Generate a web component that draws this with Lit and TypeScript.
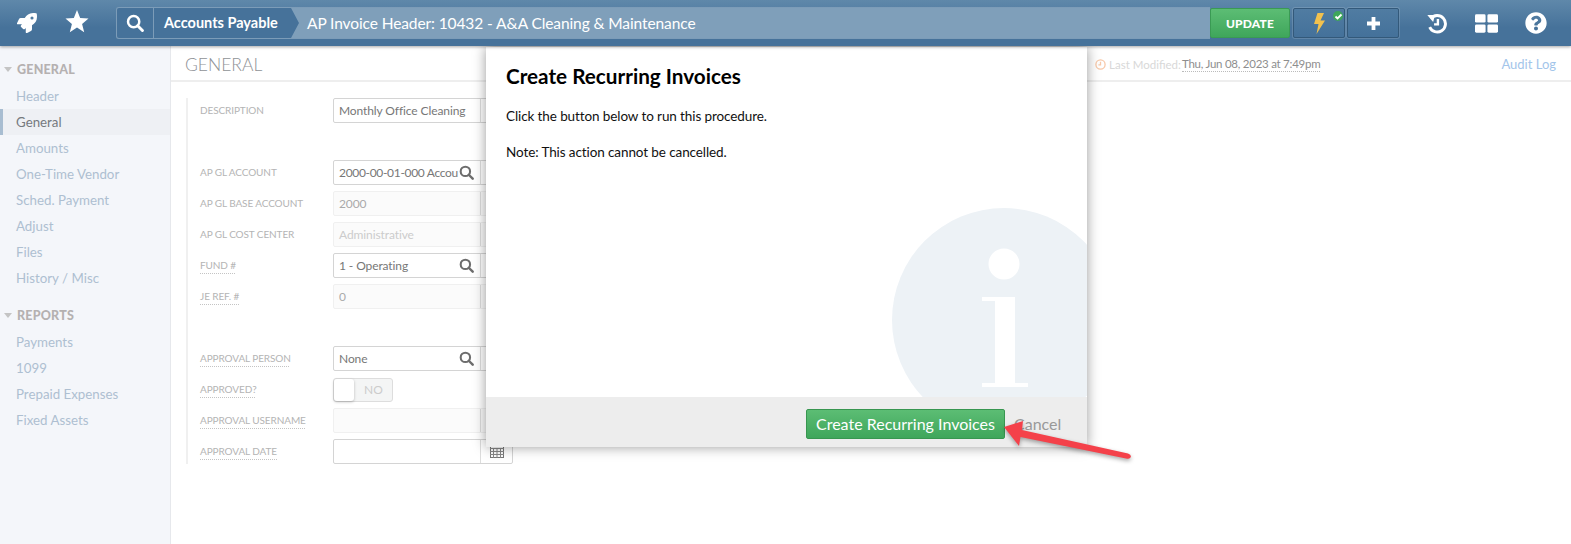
import { LitElement, css, html, svg } from 'lit';
import { customElement } from 'lit/decorators.js';
import { classMap } from 'lit/directives/class-map.js';

const searchIcon = (size = 16) => html`<svg width=${size} height=${size} viewBox="0 0 16 16" fill="none" stroke="currentColor" stroke-width="2.2">
  <circle cx="6.8" cy="6.8" r="5"></circle><path d="M10.4 10.4l4.2 4.2" stroke-linecap="round" stroke-width="2.6"></path>
</svg>`;

const generalItems = ['Header', 'General', 'Amounts', 'One-Time Vendor', 'Sched. Payment', 'Adjust', 'Files', 'History / Misc'];
const reportItems = ['Payments', '1099', 'Prepaid Expenses', 'Fixed Assets'];

type Row = { label?: string; value?: string; kind?: string; dotted?: boolean };

const rows: Row[] = [
  { label: 'DESCRIPTION', value: 'Monthly Office Cleaning', kind: 'text' },
  {},
  { label: 'AP GL ACCOUNT', value: '2000-00-01-000 Accou', kind: 'search' },
  { label: 'AP GL BASE ACCOUNT', value: '2000', kind: 'off' },
  { label: 'AP GL COST CENTER', value: 'Administrative', kind: 'off faint' },
  { label: 'FUND #', value: '1 - Operating', kind: 'search', dotted: true },
  { label: 'JE REF. #', value: '0', kind: 'off', dotted: true },
  {},
  { label: 'APPROVAL PERSON', value: 'None', kind: 'search', dotted: true },
  { label: 'APPROVED?', kind: 'toggle', dotted: true },
  { label: 'APPROVAL USERNAME', value: '', kind: 'off', dotted: true },
  { label: 'APPROVAL DATE', value: '', kind: 'date', dotted: true },
];

@customElement('app-root')
export class AppRoot extends LitElement {
  renderField(r: Row) {
    if (r.kind === 'toggle') {
      return html`<div class="toggle"><span class="knob"></span><span class="no">NO</span></div>`;
    }
    const kind = r.kind ?? 'text';
    const off = kind.startsWith('off');
    const classes = { field: true, off, faint: kind.includes('faint') };
    const tight = kind === 'search' && (r.value?.length ?? 0) > 16;
    return html`<div class=${classMap(classes)}>
      <span class=${classMap({ value: true, tight })}>${r.value}</span>
      ${kind === 'search' ? html`<span class="lookup">${searchIcon(15)}</span>` : ''}
      <span class="addon">
        ${kind === 'date'
          ? html`<svg width="14" height="13" viewBox="0 0 14 13"><rect x=".5" y=".5" width="13" height="12" fill="#fff" stroke="#777"></rect><path d="M0 3.5h14M0 6.5h14M0 9.5h14M3.5 3v10M7 3v10M10.5 3v10" stroke="#888" fill="none"></path></svg>`
          : ''}
      </span>
    </div>`;
  }

  renderSection(title: string, items: string[]) {
    return html`<div class="nav-section">
      <div class="nav-title"><span class="tri"></span>${title}</div>
      ${items.map(i => html`<div class=${classMap({ 'nav-item': true, active: i === 'General' })}>${i}</div>`)}
    </div>`;
  }

  render() {
    return html`
      <header class="topbar">
        <div class="brand-icons">
          <svg width="20" height="20" viewBox="0 0 512 512" fill="#fff"><path d="M505.05 19.1a15.89 15.89 0 0 0-12.2-12.2C460.65 0 435.46 0 410.36 0c-103.2 0-165.1 55.2-211.29 128H94.87A48 48 0 0 0 52 154.49l-49.42 98.8A24 24 0 0 0 24.07 288h103.77l-22.47 22.47a32 32 0 0 0 0 45.25l50.9 50.91a32 32 0 0 0 45.26 0L224 384.16V488a24 24 0 0 0 34.7 21.49l98.7-49.39a47.91 47.91 0 0 0 26.5-42.9V312.79c72.59-46.3 128-108.4 128-211.09.1-25.2.1-50.4-6.85-82.6zM384 168a40 40 0 1 1 40-40 40 40 0 0 1-40 40z"></path></svg>
          <svg class="star" width="24" height="24" viewBox="0 0 25 24" fill="#fff"><path d="M12.5 0.5l3.3 8.3 8.7.6-6.7 5.6 2.2 8.7-7.5-4.8-7.5 4.8 2.2-8.7L.5 9.4l8.7-.6z"></path></svg>
        </div>
        <div class="crumbs">
          <span class="crumb-search">${searchIcon(18)}</span>
          <span class="crumb-module">Accounts Payable</span>
          <span class="crumb-title">AP Invoice Header: 10432 - A&amp;A Cleaning &amp; Maintenance</span>
        </div>
        <button class="update" type="button">UPDATE</button>
        <button class="tool bolt" type="button">
          <svg width="13" height="21" viewBox="0 0 13 21" fill="#f2c14e"><path d="M4.5 0h6.5L7.5 7.5H12L3.5 21l2-10H1z"></path></svg>
          <span class="check"><svg width="9" height="9" viewBox="0 0 9 9" fill="none" stroke="#fff" stroke-width="1.8"><path d="M1.5 4.5l2 2 4-4"></path></svg></span>
        </button>
        <button class="tool plus" type="button">
          <svg width="15" height="15" viewBox="0 0 15 15" fill="#fff"><path d="M5.6 1h3.8v4.6H14v3.8H9.4V14H5.6V9.4H1V5.6h4.6z"></path></svg>
        </button>
        <div class="actions">
          <svg width="22" height="22" viewBox="0 0 24 24" fill="none" stroke="#fff"><path d="M5.2 7.2A9 9 0 1 1 4 16.5" stroke-width="3.2"></path><path d="M1.4 3.2l8.4 0-2 7.6z" fill="#fff" stroke="none"></path><path d="M13 7.5v6H8.8" stroke-width="2.6"></path></svg>
          <svg width="23" height="19" viewBox="0 0 25 20" fill="#fff"><rect width="11.5" height="9" rx="1.5"></rect><rect x="13.5" width="11.5" height="9" rx="1.5"></rect><rect y="11" width="11.5" height="9" rx="1.5"></rect><rect x="13.5" y="11" width="11.5" height="9" rx="1.5"></rect></svg>
          <svg width="22" height="22" viewBox="0 0 512 512" fill="#fff"><path d="M504 256c0 136.997-111.043 248-248 248S8 392.997 8 256C8 119.083 119.043 8 256 8s248 111.083 248 248zM262.655 90c-54.497 0-89.255 22.957-116.549 63.758-3.536 5.286-2.353 12.415 2.715 16.258l34.699 26.31c5.205 3.947 12.621 3.008 16.665-2.122 17.864-22.658 30.113-35.797 57.303-35.797 20.429 0 45.698 13.148 45.698 32.958 0 14.976-12.363 22.667-32.534 33.976C247.128 238.528 216 254.941 216 296v4c0 6.627 5.373 12 12 12h56c6.627 0 12-5.373 12-12v-1.333c0-28.462 83.186-29.647 83.186-106.667 0-58.002-60.165-102-116.531-102zM256 338c-25.365 0-46 20.635-46 46 0 25.364 20.635 46 46 46s46-20.636 46-46c0-25.365-20.635-46-46-46z"></path></svg>
        </div>
      </header>

      <div class="body">
        <nav class="sidebar">
          ${this.renderSection('GENERAL', generalItems)}
          ${this.renderSection('REPORTS', reportItems)}
        </nav>
        <main class="main">
          <div class="main-head">
            <h2>GENERAL</h2>
            <div class="modified">
              <svg width="11" height="11" viewBox="0 0 11 11" fill="none" stroke="#f8c8a8" stroke-width="1.3"><circle cx="5.5" cy="5.5" r="4.6"></circle><path d="M5.5 2.8v3H3.4"></path></svg>
              <span class="mod-label">Last Modified:</span>
              <span class="mod-date">Thu, Jun 08, 2023 at 7:49pm</span>
            </div>
            <a class="audit">Audit Log</a>
          </div>
          <div class="form">
            ${rows.map(r => r.label
              ? html`<div class="row">
                  <label class=${classMap({ dotted: !!r.dotted })}>${r.label}</label>
                  ${this.renderField(r)}
                </div>`
              : html`<div class="row"></div>`)}
          </div>
        </main>
      </div>

      <section class="modal">
        <div class="modal-body">
          <h1>Create Recurring Invoices</h1>
          <p>Click the button below to run this procedure.</p>
          <p>Note: This action cannot be cancelled.</p>
          <svg class="info" width="224" height="224" viewBox="0 0 224 224">
            <circle cx="112" cy="112" r="112" fill="#edf2f6"></circle>
            ${svg`<circle cx="112" cy="56" r="15.5" fill="#fff"></circle>
            <path d="M90 89h33v86h13v4H90v-4h13V93H90z" fill="#fff"></path>`}
          </svg>
        </div>
        <footer class="modal-foot">
          <button class="run" type="button">Create Recurring Invoices</button>
          <span class="cancel">Cancel</span>
        </footer>
      </section>

      <svg class="arrow" width="140" height="50" viewBox="0 0 140 50" fill="#f4414a">
        <path d="M3 17L22 11L21 20L127 43.5Q131 45 129.5 47.5Q128 49.5 125 48.5L19.5 27L18 36z"></path>
      </svg>
    `;
  }

  static override styles = css`
    :host {
      display: block;
      position: relative;
      width: 1571px;
      height: 544px;
      overflow: hidden;
      background: #fff;
      font-family: 'Lato', 'Liberation Sans', sans-serif;
      font-size: 14px;
      color: #777;
    }

    .topbar {
      position: relative;
      z-index: 2;
      height: 46px;
      box-sizing: border-box;
      display: flex;
      align-items: center;
      padding: 0 0 0 17px;
      background: linear-gradient(#5f88aa, #46729a 60%);
      box-shadow: 0 1px 3px rgba(0, 0, 0, 0.35);
    }
    .brand-icons { display: flex; align-items: center; gap: 28px; width: 99px; }
    .star { margin-bottom: 4px; }
    .crumbs {
      flex: none;
      width: 1094px;
      height: 32px;
      display: flex;
      align-items: stretch;
      box-sizing: border-box;
      border: 1px solid #7c9cb8;
      border-right: 0;
      border-radius: 3px 0 0 3px;
      overflow: hidden;
      background: #7f9fba;
      color: #fff;
    }
    .crumb-search {
      width: 36px;
      display: flex;
      align-items: center;
      justify-content: center;
      background: #46729a;
      border-right: 1px solid #7c9cb8;
    }
    .crumb-module {
      position: relative;
      width: 137px;
      box-sizing: border-box;
      padding-left: 10px;
      line-height: 30px;
      font-weight: 700;
      font-size: 14.5px;
      background: #46729a;
      white-space: nowrap;
    }
    .crumb-module::after {
      content: '';
      position: absolute;
      left: 137px;
      top: 0;
      border-left: 8px solid #46729a;
      border-top: 15px solid transparent;
      border-bottom: 15px solid transparent;
    }
    .crumb-title {
      padding-left: 16px;
      line-height: 30px;
      font-size: 15.5px;
      letter-spacing: -0.1px;
      white-space: nowrap;
    }
    button { font-family: inherit; cursor: pointer; }
    .update {
      flex: none;
      width: 80px;
      height: 30px;
      padding: 0;
      border: 1px solid #3a9a54;
      border-radius: 2px;
      background: linear-gradient(#5cbd74, #3fa65b);
      color: #fff;
      font-weight: 900;
      font-size: 12px;
      letter-spacing: 0.2px;
    }
    .tool {
      flex: none;
      position: relative;
      height: 30px;
      padding: 0;
      display: flex;
      align-items: center;
      justify-content: center;
      border: 1px solid #33597a;
      border-radius: 2px;
      background: linear-gradient(#507ca2, #44719a);
      box-shadow: 0 0 0 1px rgba(255, 255, 255, 0.14);
    }
    .bolt { width: 52px; margin-left: 3px; }
    .plus { width: 52px; margin-left: 2px; }
    .check {
      position: absolute;
      top: 2px;
      right: 1px;
      width: 10px;
      height: 10px;
      border-radius: 50%;
      background: #3fa65b;
      display: flex;
      align-items: center;
      justify-content: center;
    }
    .actions { flex: none; display: flex; align-items: center; margin-left: 27px; gap: 27px; }

    .body { display: flex; height: 498px; }
    .sidebar {
      flex: none;
      width: 171px;
      box-sizing: border-box;
      padding-top: 10px;
      background: #f4f6fa;
      border-right: 1px solid #e6e8ec;
    }
    .nav-section { margin-bottom: 11px; }
    .nav-title {
      display: flex;
      align-items: center;
      height: 27px;
      font-size: 12.5px;
      font-weight: 900;
      color: #b5b1b1;
      letter-spacing: 0.2px;
    }
    .tri {
      width: 0;
      margin: 0 5px 0 4px;
      border-left: 4px solid transparent;
      border-right: 4px solid transparent;
      border-top: 5px solid #c4c4c4;
    }
    .nav-item {
      height: 26px;
      line-height: 26px;
      padding-left: 16px;
      font-size: 13.3px;
      color: #aebfd1;
    }
    .nav-item.active {
      padding-left: 13px;
      border-left: 3px solid #a8bdd1;
      background: #eef0f4;
      color: #75797e;
    }

    .main { flex: 1; min-width: 0; }
    .main-head {
      height: 36px;
      box-sizing: border-box;
      display: flex;
      align-items: center;
      padding: 2px 15px 0 14px;
      border-bottom: 2px solid #eee;
    }
    .main-head h2 {
      flex: 1;
      margin: 0;
      font-size: 17.5px;
      font-weight: 300;
      color: #8f9296;
    }
    .modified { display: flex; align-items: center; font-size: 11.5px; gap: 3px; margin-right: 181px; }
    .mod-label { color: #d8d8d8; }
    .mod-date { color: #8e8e8e; border-bottom: 1px dotted #bbb; line-height: 14px; letter-spacing: -0.25px; margin-left: -2px; }
    .audit { font-size: 13px; color: #a3c5ea; }

    .form {
      margin: 16px 0 0 15px;
      padding-left: 12px;
      border-left: 2px solid #f0f0f0;
      width: 313px;
      display: flex;
      flex-direction: column;
      gap: 6px;
    }
    .row { display: flex; align-items: center; height: 25px; }
    label {
      flex: none;
      width: 133px;
      margin-bottom: 1px;
      font-size: 10px;
      color: #b4b4b4;
      letter-spacing: -0.1px;
    }
    label.dotted { text-decoration: underline dotted #c4c4c4; text-underline-offset: 4px; }
    .field {
      flex: none;
      position: relative;
      box-sizing: border-box;
      width: 180px;
      height: 25px;
      display: flex;
      align-items: center;
      padding-left: 5px;
      border: 1px solid #d4d4d4;
      border-radius: 2px;
      background: #fff;
      font-size: 12px;
      letter-spacing: -0.1px;
      color: #777;
    }
    .field.off { background: #fbfbfb; border-color: #f0f0f0; color: #aaa; }
    .field.faint { color: #ccc; }
    .value { white-space: nowrap; }
    .value.tight { letter-spacing: -0.32px; }
    .lookup { position: absolute; left: 125px; top: 4px; color: #6d6d6d; display: flex; }
    .addon {
      position: absolute;
      right: 0;
      top: 0;
      bottom: 0;
      width: 31px;
      display: flex;
      align-items: center;
      justify-content: center;
      border-left: 1px solid #ddd;
    }
    .toggle {
      flex: none;
      position: relative;
      box-sizing: border-box;
      width: 60px;
      height: 24px;
      border: 1px solid #ddd;
      border-radius: 3px;
      background: #f4f5f5;
    }
    .knob {
      position: absolute;
      left: 0;
      top: 0;
      width: 20px;
      height: 22px;
      border-radius: 3px;
      background: #fff;
      box-shadow: 0 1px 3px rgba(0, 0, 0, 0.25);
    }
    .no { position: absolute; left: 30px; top: 3px; font-size: 12px; color: #ccc; }

    .modal {
      position: absolute;
      z-index: 1;
      left: 486px;
      top: 47px;
      width: 601px;
      height: 400px;
      display: flex;
      flex-direction: column;
      background: #fff;
      box-shadow: 0 0 12px rgba(0, 0, 0, 0.4);
      color: #111;
    }
    .modal-body { position: relative; flex: 1; overflow: hidden; padding: 0 20px; }
    .modal-body h1 {
      margin: 16px 0 0;
      font-size: 20.7px;
      line-height: 27px;
      font-weight: 700;
      color: #000;
    }
    .modal-body p { margin: 16px 0 0; font-size: 13.5px; line-height: 20px; letter-spacing: -0.1px; }
    .info { position: absolute; left: 406px; top: 161px; }
    .modal-foot {
      flex: none;
      height: 50px;
      box-sizing: border-box;
      padding: 4px 0 0 320px;
      display: flex;
      align-items: center;
      background: #ededed;
    }
    .run {
      width: 199px;
      height: 30px;
      padding: 0 0 2px;
      border: 1px solid #389650;
      border-radius: 2px;
      background: linear-gradient(#5cbd74, #3fa65b);
      color: #fff;
      font-size: 16px;
    }
    .cancel { margin: 0 0 2px 9px; font-size: 16px; color: #999; }
    .arrow {
      position: absolute;
      z-index: 3;
      left: 1001px;
      top: 410px;
      filter: drop-shadow(0 2px 2px rgba(0, 0, 0, 0.35));
    }
  `;
}
